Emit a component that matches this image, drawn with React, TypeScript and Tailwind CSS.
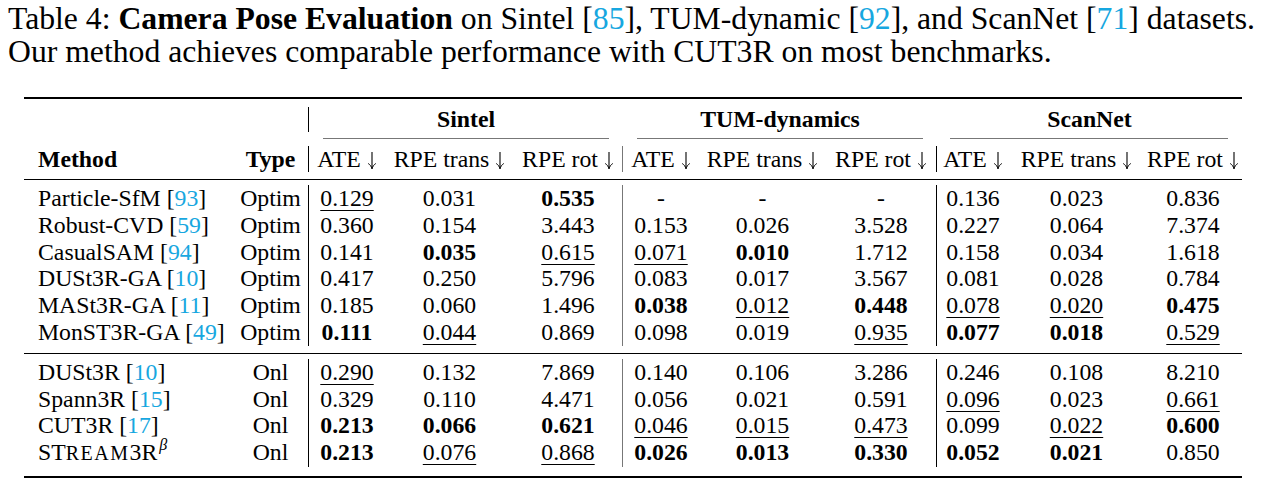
const cols =
  'grid grid-cols-[209px_76px_76px_129px_109px_76px_127px_111px_72px_135px_98px]';

type Row = { method: React.ReactNode; type: string; vals: string[] };

const Cite = ({ n }: { n: string }) => (
  <>
    [<span className="text-[#17a7e0]">{n}</span>]
  </>
);

// thin math-style down arrow (\downarrow)
const Down = () => (
  <svg width="10" height="19" viewBox="0 0 10 19" className="inline-block align-[-3px]">
    <path d="M5 1V17" stroke="black" strokeWidth="1.1" fill="none" />
    <path d="M1.2 12.5C3 13.6 4.4 15.4 5 18C5.6 15.4 7 13.6 8.8 12.5" stroke="black" strokeWidth="1" fill="none" />
  </svg>
);

const group1: Row[] = [
  { method: <>Particle-SfM <Cite n="93" /></>, type: 'Optim', vals: ['0.129u', '0.031', '0.535b', '-', '-', '-', '0.136', '0.023', '0.836'] },
  { method: <>Robust-CVD <Cite n="59" /></>, type: 'Optim', vals: ['0.360', '0.154', '3.443', '0.153', '0.026', '3.528', '0.227', '0.064', '7.374'] },
  { method: <>CasualSAM <Cite n="94" /></>, type: 'Optim', vals: ['0.141', '0.035b', '0.615u', '0.071u', '0.010b', '1.712', '0.158', '0.034', '1.618'] },
  { method: <>DUSt3R-GA <Cite n="10" /></>, type: 'Optim', vals: ['0.417', '0.250', '5.796', '0.083', '0.017', '3.567', '0.081', '0.028', '0.784'] },
  { method: <>MASt3R-GA <Cite n="11" /></>, type: 'Optim', vals: ['0.185', '0.060', '1.496', '0.038b', '0.012u', '0.448b', '0.078u', '0.020u', '0.475b'] },
  { method: <>MonST3R-GA <Cite n="49" /></>, type: 'Optim', vals: ['0.111b', '0.044u', '0.869', '0.098', '0.019', '0.935u', '0.077b', '0.018b', '0.529u'] },
];

const group2: Row[] = [
  { method: <>DUSt3R <Cite n="10" /></>, type: 'Onl', vals: ['0.290u', '0.132', '7.869', '0.140', '0.106', '3.286', '0.246', '0.108', '8.210'] },
  { method: <>Spann3R <Cite n="15" /></>, type: 'Onl', vals: ['0.329', '0.110', '4.471', '0.056', '0.021', '0.591', '0.096u', '0.023', '0.661u'] },
  { method: <>CUT3R <Cite n="17" /></>, type: 'Onl', vals: ['0.213b', '0.066b', '0.621b', '0.046u', '0.015u', '0.473u', '0.099', '0.022u', '0.600b'] },
  {
    method: (
      <>
        ST<span className="text-[20px] tracking-[1.5px]">REAM</span>3R
        <span className="relative -top-[10px] ml-[2px] text-[16px] italic leading-none">β</span>
      </>
    ),
    type: 'Onl',
    vals: ['0.213b', '0.076u', '0.868u', '0.026b', '0.013b', '0.330b', '0.052b', '0.021b', '0.850'],
  },
];

const Val = ({ v, i }: { v: string; i: number }) => {
  const flag = v.slice(-1);
  const text = flag === 'b' || flag === 'u' ? v.slice(0, -1) : v;
  return (
    <div
      className={`text-center ${i === 2 ? 'border-r border-[#777]' : ''} ${i === 5 ? 'border-r border-black' : ''}`}
    >
      <span
        className={`${flag === 'b' ? 'font-bold' : ''} ${flag === 'u' ? 'underline decoration-1 underline-offset-[4px]' : ''}`}
      >
        {text}
      </span>
    </div>
  );
};

const Group = ({ rows, last }: { rows: Row[]; last?: boolean }) => (
  <div className={last ? 'pt-[5px] pb-[10px] border-b-2 border-black' : 'pt-[5px] pb-[7px] border-b border-black'}>
    {rows.map((r, idx) => (
      <div key={idx} className={`${cols} leading-[26.8px] h-[26.8px]`}>
        <div className="pl-[14px] whitespace-nowrap">{r.method}</div>
        <div className="text-center border-r border-black">{r.type}</div>
        {r.vals.map((v, i) => (
          <Val key={i} v={v} i={i} />
        ))}
      </div>
    ))}
  </div>
);

const metrics = ['ATE', 'RPE trans', 'RPE rot'];

export default function App() {
  return (
    <div
      className="w-[1271px] h-[479px] overflow-hidden bg-white text-black"
      style={{ fontFamily: '"Liberation Serif", "Times New Roman", serif' }}
    >
      <div className="pl-[8px] pt-[2px] text-[31.7px] leading-[33px] whitespace-nowrap">
        Table 4: <span className="font-bold">Camera Pose Evaluation</span> on Sintel <Cite n="85" />, TUM-dynamic{' '}
        <Cite n="92" />, and ScanNet <Cite n="71" /> datasets.
        <br />
        Our method achieves comparable performance with CUT3R on most benchmarks.
      </div>

      <div className="ml-[24px] mt-[29px] w-[1218px] border-t-2 border-black text-[23.75px]">
        {/* dataset headers */}
        <div className={`${cols} pt-[8px] leading-[25px]`}>
          <div className="col-span-2 h-[25px] border-r border-black" />
          <div className="col-span-3 text-center font-bold">Sintel</div>
          <div className="col-span-3 text-center font-bold">TUM-dynamics</div>
          <div className="col-span-3 text-center font-bold">ScanNet</div>
        </div>
        <div className={`${cols} mt-[6px]`}>
          <div className="col-span-2" />
          <div className="col-span-3 mx-[14px] h-px bg-[#777]" />
          <div className="col-span-3 mx-[14px] h-px bg-[#777]" />
          <div className="col-span-3 ml-[13px] mr-[14px] h-px bg-[#777]" />
        </div>
        {/* metric headers */}
        <div className={`${cols} pt-[7px] pb-[7px] leading-[26px] border-b border-black`}>
          <div className="pl-[14px] font-bold">Method</div>
          <div className="text-center font-bold border-r border-black">Type</div>
          {[0, 1, 2].map((g) =>
            metrics.map((m, i) => (
              <div
                key={`${g}-${i}`}
                className={`text-center whitespace-nowrap ${i === 2 && g === 0 ? 'border-r border-[#777]' : ''} ${i === 2 && g === 1 ? 'border-r border-black' : ''}`}
              >
                {m} <Down />
              </div>
            ))
          )}
        </div>
        <Group rows={group1} />
        <Group rows={group2} last />
      </div>
    </div>
  );
}
